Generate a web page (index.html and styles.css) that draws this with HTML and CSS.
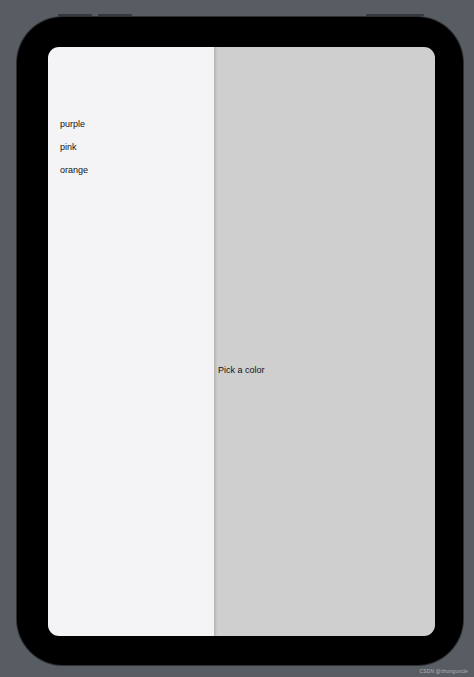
FILE: index.html
```html
<!DOCTYPE html>
<html>
<head>
<meta charset="utf-8">
<link rel="stylesheet" href="styles.css">
</head>
<body>
<div class="stage">
  <div class="buttons">
    <span class="btn btn-a"></span>
    <span class="btn btn-b"></span>
    <span class="btn btn-c"></span>
  </div>
  <div class="device">
    <div class="screen">
      <div class="sidebar">
        <div class="item">purple</div>
        <div class="item">pink</div>
        <div class="item">orange</div>
      </div>
      <div class="detail">
        <div class="placeholder">Pick a color</div>
      </div>
    </div>
  </div>
  <div class="watermark">CSDN @zhonguncle</div>
</div>
</body>
</html>
```
FILE: styles.css
```css
html, body {
  margin: 0;
  padding: 0;
}
body {
  background: #585d64;
  font-family: "Liberation Sans", Arial, sans-serif;
  width: 474px;
  height: 677px;
  overflow: hidden;
}
.stage {
  position: relative;
  width: 474px;
  height: 677px;
}
.buttons {
  height: 17px;
  display: flex;
  align-items: flex-start;
}
.btn {
  display: block;
  height: 2px;
  margin-top: 14px;
  background: #35383d;
  border-radius: 1px;
}
.btn-a { width: 34px; margin-left: 58px; }
.btn-b { width: 34px; margin-left: 6px; }
.btn-c { width: 58px; margin-left: 234px; }
.device {
  margin-left: 17px;
  width: 446px;
  height: 648px;
  box-sizing: border-box;
  padding: 30px 28px 29px 31px;
  background: #000;
  border-radius: 46px;
  box-shadow: 0 0 0 1px #2c2f33;
}
.screen {
  width: 100%;
  height: 100%;
  border-radius: 11px;
  overflow: hidden;
  display: flex;
}
.sidebar {
  width: 166px;
  background: #f4f4f6;
  padding-top: 66px;
  padding-left: 12px;
  box-sizing: border-box;
}
.item {
  font-size: 9px;
  line-height: 23px;
  color: #111;
}
.detail {
  flex: 1;
  background: #cfcfcf;
  box-shadow: inset 3px 0 2px -1px #b8b8b8;
  padding-top: 312px;
  padding-left: 4px;
}
.placeholder {
  font-size: 9px;
  line-height: 23px;
  color: #111;
}
.watermark {
  position: absolute;
  right: 6px;
  bottom: 3px;
  font-size: 5px;
  color: #aeb3ba;
  letter-spacing: 0.15px;
}
```
